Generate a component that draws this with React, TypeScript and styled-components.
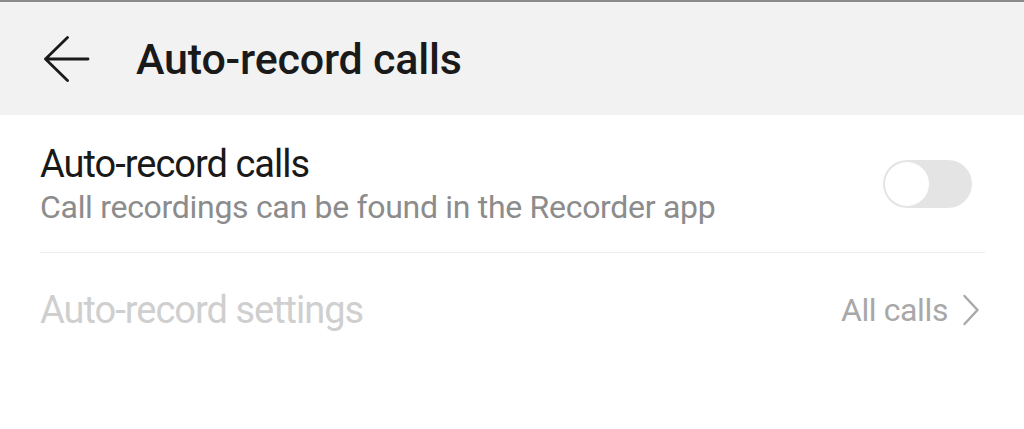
import React from "react";
import styled, { createGlobalStyle } from "styled-components";

const Global = createGlobalStyle`
  html, body { margin: 0; padding: 0; background: #ffffff; }
  body { font-family: Roboto, "Noto Sans", sans-serif; -webkit-font-smoothing: antialiased; }
`;

const Screen = styled.div`
  width: 1024px;
  height: 429px;
  background: #ffffff;
  border-top: 2px solid #8a8a8a;
  box-sizing: border-box;
  display: flex;
  flex-direction: column;
  overflow: hidden;
`;

const Toolbar = styled.header`
  height: 113px;
  background: #f2f2f2;
  display: flex;
  align-items: center;
  padding-left: 43px;
  gap: 45px;
`;

const BackButton = styled.button`
  border: 0;
  background: transparent;
  padding: 0;
  width: 48px;
  height: 48px;
  display: flex;
  align-items: center;
  justify-content: center;
  cursor: pointer;
`;

const Title = styled.h1`
  margin: 0;
  font-family: Roboto, sans-serif;
  font-weight: 500;
  font-size: 43px;
  line-height: 50px;
  color: #1a1a1a;
  letter-spacing: -0.2px;
`;

const List = styled.div`
  display: flex;
  flex-direction: column;
  padding: 0 39px 0 40px;
`;

const Row = styled.div<{ $height: number; $divider?: boolean }>`
  height: ${(p) => p.$height}px;
  display: flex;
  align-items: center;
  justify-content: space-between;
  border-bottom: ${(p) => (p.$divider ? "1px solid #ececec" : "none")};
`;

const TextBlock = styled.div`
  display: flex;
  flex-direction: column;
  gap: 4px;
  padding-top: 2px;
`;

const Primary = styled.div<{ $muted?: boolean }>`
  font-size: 38px;
  color: ${(p) => (p.$muted ? "#cfcfcf" : "#191919")};
  letter-spacing: -1px;
  line-height: 40px;
`;

const Secondary = styled.div`
  font-size: 32px;
  color: #8c8c8c;
  letter-spacing: -0.3px;
  line-height: 38px;
`;

const Toggle = styled.div`
  width: 89px;
  height: 48px;
  border-radius: 24px;
  background: #e4e4e4;
  position: relative;
  margin-right: 13px;
`;

const Knob = styled.div`
  position: absolute;
  left: 2px;
  top: 2px;
  width: 44px;
  height: 44px;
  border-radius: 50%;
  background: #ffffff;
`;

const Value = styled.div`
  display: flex;
  align-items: center;
  gap: 14px;
  font-size: 32px;
  color: #a8a8a8;
  letter-spacing: -0.4px;
  margin-right: 5px;
`;

export default function App() {
  return (
    <>
      <Global />
      <Screen>
        <Toolbar>
          <BackButton aria-label="Back">
            <svg width="48" height="46" viewBox="0 0 48 46" fill="none">
              <path d="M24.5 1.5 L2.5 23 L24.5 44.5 M2.5 23 H45" stroke="#1a1a1a" strokeWidth="2.8" strokeLinecap="round" strokeLinejoin="round" />
            </svg>
          </BackButton>
          <Title>Auto-record calls</Title>
        </Toolbar>
        <List>
          <Row $height={137} $divider>
            <TextBlock>
              <Primary>Auto-record calls</Primary>
              <Secondary>Call recordings can be found in the Recorder app</Secondary>
            </TextBlock>
            <Toggle>
              <Knob />
            </Toggle>
          </Row>
          <Row $height={114}>
            <Primary $muted>Auto-record settings</Primary>
            <Value>
              All calls
              <svg width="18" height="32" viewBox="0 0 18 32" fill="none">
                <path d="M2.5 2 L15.5 16 L2.5 30" stroke="#a8a8a8" strokeWidth="2.4" strokeLinecap="round" strokeLinejoin="round" />
              </svg>
            </Value>
          </Row>
        </List>
      </Screen>
    </>
  );
}
